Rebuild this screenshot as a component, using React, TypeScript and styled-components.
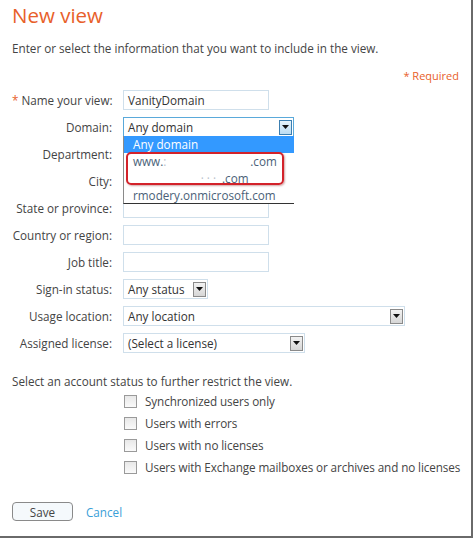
import styled, { createGlobalStyle } from 'styled-components';

const GlobalStyle = createGlobalStyle`
  html, body {
    margin: 0;
    padding: 0;
    background: #fff;
  }
  body {
    font-family: 'Open Sans', 'Noto Sans', sans-serif;
    color: #444;
  }
`;

type Field = {
  label: string;
  required?: boolean;
  kind: 'text' | 'select';
  value?: string;
  width?: number;
  focused?: boolean;
};

const fields: Field[] = [
  { label: 'Name your view:', required: true, kind: 'text', value: 'VanityDomain' },
  { label: 'Domain:', kind: 'select', value: 'Any domain', width: 171, focused: true },
  { label: 'Department:', kind: 'text' },
  { label: 'City:', kind: 'text' },
  { label: 'State or province:', kind: 'text' },
  { label: 'Country or region:', kind: 'text' },
  { label: 'Job title:', kind: 'text' },
  { label: 'Sign-in status:', kind: 'select', value: 'Any status', width: 85 },
  { label: 'Usage location:', kind: 'select', value: 'Any location', width: 282 },
  { label: 'Assigned license:', kind: 'select', value: '(Select a license)', width: 182 },
];

const statuses = [
  'Synchronized users only',
  'Users with errors',
  'Users with no licenses',
  'Users with Exchange mailboxes or archives and no licenses',
];

const Arrow = ({ focused }: { focused?: boolean }) => (
  <ArrowBox $focused={focused}>
    <svg width="7" height="4" viewBox="0 0 7 4">
      <path d="M0 0h7L3.5 4z" fill="#111" />
    </svg>
  </ArrowBox>
);

const App = () => {
  return (
    <>
      <GlobalStyle />
      <Frame>
        <Title>New view</Title>
        <Intro>Enter or select the information that you want to include in the view.</Intro>
        <Required>* Required</Required>
        <Form>
          {fields.map((f, i) => (
            <Row key={f.label}>
              <Label>
                {f.required && <Star>* </Star>}
                {f.label}
              </Label>
              <Control>
                {f.kind === 'text' && <TextBox>{f.value}</TextBox>}
                {f.kind === 'select' && (
                  <SelectBox $width={f.width || 146} $focused={f.focused}>
                    <span>{f.value}</span>
                    <Arrow focused={f.focused} />
                  </SelectBox>
                )}
                {i === 1 && (
                  <DropList>
                    <Option $selected>Any domain</Option>
                    <Option>
                      www.<Redacted $width={87} $left>:</Redacted>.com
                    </Option>
                    <Option>
                      <Redacted $width={89}>·&nbsp;·&nbsp;·</Redacted>.com
                    </Option>
                    <Option>rmodery.onmicrosoft.com</Option>
                    <Highlight />
                  </DropList>
                )}
              </Control>
            </Row>
          ))}
        </Form>
        <Intro>Select an account status to further restrict the view.</Intro>
        <Checks>
          {statuses.map((s) => (
            <CheckRow key={s}>
              <CheckBox />
              {s}
            </CheckRow>
          ))}
        </Checks>
        <Buttons>
          <SaveButton>Save</SaveButton>
          <CancelLink>Cancel</CancelLink>
        </Buttons>
      </Frame>
    </>
  );
};

const Frame = styled.div`
  width: 459px;
  height: 536px;
  padding: 0 0 0 12px;
  border-right: 2px solid #6a6a6a;
  border-bottom: 2px solid #6a6a6a;
  font-size: 11.7px;
  line-height: 16px;
  overflow: hidden;
`;

const Title = styled.h1`
  margin: 0;
  padding-top: 1px;
  font-size: 20.5px;
  line-height: 29px;
  font-weight: 400;
  color: #e8602a;
`;

const Intro = styled.div`
  margin-top: 10px;
  color: #444;
  white-space: nowrap;
`;

const Required = styled.div`
  margin-top: 12px;
  padding-right: 12px;
  text-align: right;
  color: #e8602a;
  font-size: 11px;
`;

const Form = styled.div`
  display: flex;
  flex-direction: column;
  gap: 7px;
  margin-top: 6px;
  margin-bottom: 20px;
`;

const Row = styled.div`
  display: flex;
  align-items: center;
  height: 20px;
`;

const Label = styled.div`
  width: 100px;
  margin-right: 11px;
  text-align: right;
  white-space: nowrap;
  color: #444;
`;

const Star = styled.span`
  color: #e8602a;
`;

const Control = styled.div`
  position: relative;
  flex: 1;
  height: 20px;
`;

const TextBox = styled.div`
  width: 146px;
  height: 20px;
  box-sizing: border-box;
  border: 1px solid #cfdfeb;
  padding: 1px 4px;
  color: #333;
`;

const SelectBox = styled.div<{ $width: number; $focused?: boolean }>`
  width: ${(p) => p.$width}px;
  height: 20px;
  box-sizing: border-box;
  border: 1px solid ${(p) => (p.$focused ? '#5aa9da' : '#cfdfeb')};
  display: flex;
  align-items: center;
  justify-content: space-between;
  padding: 0 0 0 4px;
  color: #333;
  span {
    line-height: 16px;
  }
`;

const ArrowBox = styled.div<{ $focused?: boolean }>`
  width: 13px;
  height: 15px;
  margin-right: 1px;
  box-sizing: border-box;
  border: 1px solid ${(p) => (p.$focused ? '#3c7fb1' : '#8a8a8a')};
  background: ${(p) =>
    p.$focused
      ? 'linear-gradient(#e6f3fb, #bcdcf2)'
      : 'linear-gradient(#f2f2f2, #d6d6d6)'};
  display: flex;
  align-items: center;
  justify-content: center;
`;

const DropList = styled.div`
  position: absolute;
  left: 0;
  top: 19px;
  width: 171px;
  box-sizing: border-box;
  background: #fff;
  border-left: 1px solid #8a8a8a;
  border-bottom: 1px solid #333;
  z-index: 2;
`;

const Option = styled.div<{ $selected?: boolean }>`
  display: flex;
  align-items: center;
  height: 16.75px;
  padding: 0 0 0 9px;
  white-space: nowrap;
  background: ${(p) => (p.$selected ? '#3399ff' : '#fff')};
  color: ${(p) => (p.$selected ? '#fff' : '#4a5f78')};
  font-size: 11.7px;
`;

const Redacted = styled.span<{ $width: number; $left?: boolean }>`
  display: inline-block;
  width: ${(p) => p.$width}px;
  color: #b8c0ca;
  text-align: ${(p) => (p.$left ? 'left' : 'right')};
  padding-right: 6px;
  box-sizing: border-box;
`;

const Highlight = styled.div`
  position: absolute;
  left: 2px;
  top: 16px;
  width: 158px;
  height: 33px;
  box-sizing: border-box;
  border: 2px solid #d3222a;
  border-radius: 5px;
  box-shadow: 1px 1px 2px rgba(120, 0, 0, 0.35);
`;

const Checks = styled.div`
  display: flex;
  flex-direction: column;
  gap: 6px;
  margin: 4px 0 0 112px;
`;

const CheckRow = styled.div`
  display: flex;
  align-items: center;
  height: 16px;
  white-space: nowrap;
  color: #444;
  letter-spacing: -0.1px;
`;

const CheckBox = styled.span`
  width: 11px;
  height: 11px;
  flex: none;
  border: 1px solid #9a9a9a;
  background: linear-gradient(#e8e8e8, #fafafa);
  margin-right: 8px;
`;

const Buttons = styled.div`
  display: flex;
  align-items: center;
  gap: 13px;
  margin-top: 27px;
`;

const SaveButton = styled.button`
  width: 61px;
  height: 19px;
  padding: 0;
  border: 1px solid #8a8a8a;
  border-radius: 4px;
  background: #f5f9fc;
  font-family: inherit;
  font-size: 11.7px;
  color: #444;
`;

const CancelLink = styled.a`
  color: #3aa0d8;
  cursor: pointer;
`;

export default App;
